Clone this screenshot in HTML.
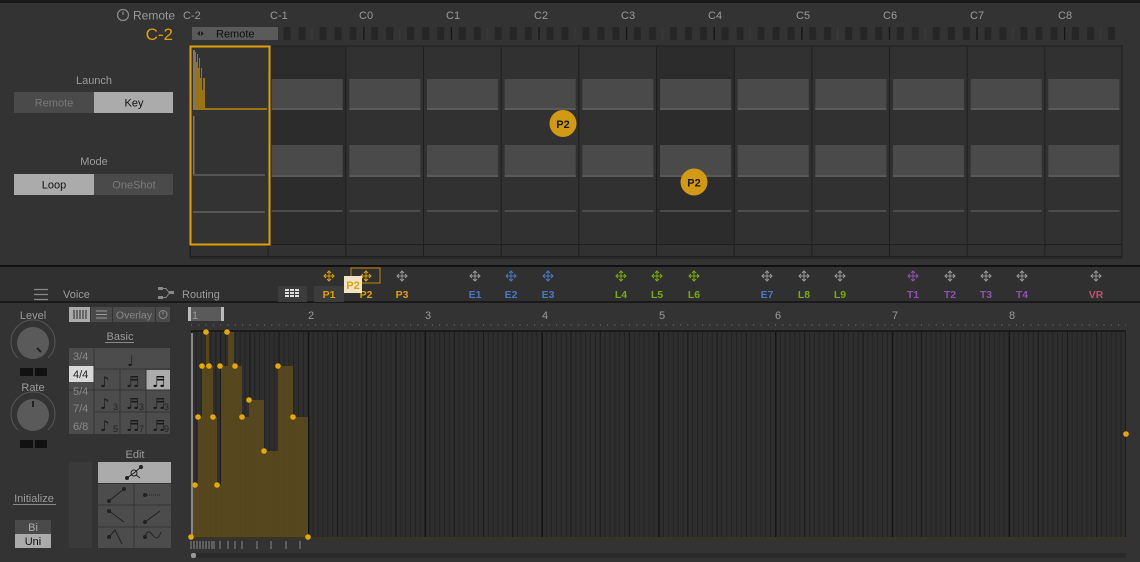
<!DOCTYPE html>
<html><head><meta charset="utf-8"><style>
html,body{margin:0;padding:0;background:#333;}
svg{display:block;font-family:"Liberation Sans",sans-serif;}
</style></head><body>
<svg width="1140" height="562" viewBox="0 0 1140 562" xmlns="http://www.w3.org/2000/svg">
<defs>
<pattern id="keys" x="188" y="0" width="87.6" height="562" patternUnits="userSpaceOnUse">
<rect x="8" y="27" width="7" height="13" fill="#262626"/>
<rect x="23" y="27" width="7" height="13" fill="#262626"/>
<rect x="36" y="28" width="1" height="11" fill="#3c3c3c"/>
<rect x="44" y="27" width="7" height="13" fill="#262626"/>
<rect x="59" y="27" width="7" height="13" fill="#262626"/>
<rect x="74" y="27" width="7" height="13" fill="#262626"/>
<rect x="0" y="27" width="1.3" height="13" fill="#141414"/>
</pattern>
<pattern id="col" x="190" y="0" width="77.67" height="562" patternUnits="userSpaceOnUse">
<rect x="0" y="47" width="1" height="210" fill="#1e1e1e"/>
<rect x="4" y="79" width="71" height="31" fill="#4a4a4a"/>
<rect x="4" y="108" width="71" height="2" fill="#5a5a5a"/>
<rect x="4" y="145" width="71" height="32" fill="#4a4a4a"/>
<rect x="4" y="175" width="71" height="2" fill="#5a5a5a"/>
<rect x="4" y="210" width="71" height="2" fill="#4c4c4c"/>
</pattern>
<pattern id="dots" x="0" y="0" width="3" height="3" patternUnits="userSpaceOnUse"><rect width="1.5" height="1" fill="#1c1c1c"/></pattern>
<pattern id="stripe" x="191" y="0" width="4.866" height="562" patternUnits="userSpaceOnUse">
<rect width="4.866" height="562" fill="#2e2e2e"/><rect x="0" width="1" height="562" fill="#222"/>
</pattern>
<pattern id="beat" x="191" y="0" width="116.8" height="562" patternUnits="userSpaceOnUse">
<rect x="0" width="1.5" height="562" fill="#141414"/>
<rect x="29.2" width="1" height="562" fill="#1a1a1a"/>
<rect x="58.4" width="1" height="562" fill="#1a1a1a"/>
<rect x="87.6" width="1" height="562" fill="#1a1a1a"/>
</pattern>
<pattern id="tick" x="191" y="0" width="7.3" height="562" patternUnits="userSpaceOnUse"><rect width="1" height="2" y="324" fill="#555"/></pattern>
<g id="mv"><path d="M0,-5V5M-5,0H5M-2,-3L0,-5L2,-3M-2,3L0,5L2,3M-3,-2L-5,0L-3,2M3,-2L5,0L3,2" stroke="currentColor" stroke-width="1" fill="none"/></g>
</defs>

<rect x="0" y="0" width="1140" height="3" fill="#1a1a1a"/>
<rect x="0" y="3" width="1140" height="262" fill="#333"/>

<circle cx="123" cy="15" r="5.5" fill="none" stroke="#888" stroke-width="1.3"/>
<path d="M123,11.5V15" stroke="#888" stroke-width="1.3"/>
<text x="133" y="19.5" font-size="12" fill="#9a9a9a">Remote</text>
<text x="173" y="40" font-size="17" fill="#e0a000" text-anchor="end">C-2</text>
<rect x="192" y="27" width="86" height="13" fill="#5a5a5a"/>
<path d="M197,33.5l3,-2.5v5z M204,33.5l-3,-2.5v5z" fill="#222"/>
<text x="216" y="37.5" font-size="11" fill="#111">Remote</text>
<rect x="278" y="27" width="844" height="13" fill="#333"/>
<rect x="278" y="27" width="844" height="13" fill="url(#keys)"/>
<g font-size="11" fill="#9a9a9a">
<text x="183" y="19">C-2</text><text x="270" y="19">C-1</text><text x="359" y="19">C0</text>
<text x="446" y="19">C1</text><text x="534" y="19">C2</text><text x="621" y="19">C3</text>
<text x="708" y="19">C4</text><text x="796" y="19">C5</text><text x="883" y="19">C6</text>
<text x="970" y="19">C7</text><text x="1058" y="19">C8</text>
</g>

<rect x="190" y="46" width="932" height="212" fill="#313131" stroke="#1e1e1e"/>
<rect x="269" y="47" width="77" height="197" fill="#2c2c2c"/>
<rect x="657" y="47" width="78" height="197" fill="#2c2c2c"/>
<rect x="190" y="47" width="932" height="210" fill="url(#col)"/>
<rect x="190" y="112" width="932" height="1" fill="url(#dots)"/>
<rect x="190" y="178" width="932" height="1" fill="url(#dots)"/>
<rect x="190" y="244" width="932" height="1" fill="#1e1e1e"/>
<rect x="190" y="256" width="932" height="1" fill="#1e1e1e"/>
<rect x="191" y="47" width="78" height="198" fill="#333"/>
<rect x="193" y="50" width="2" height="60" fill="#777"/>
<path d="M195,110V52h1V62h1v-8h1v14h1v-10h1v20h1v-10h1v22h1v-12h2V110z" fill="#9a7410"/>
<rect x="195" y="108" width="72" height="2" fill="#9a7410"/>
<rect x="193" y="116" width="1.5" height="58" fill="#777"/>
<rect x="193" y="174" width="72" height="2" fill="#555"/>
<rect x="193" y="211" width="72" height="2" fill="#555"/>
<rect x="190.5" y="46.5" width="79" height="198" fill="none" stroke="#e0a000" stroke-width="2"/>
<circle cx="563" cy="123.5" r="13.5" fill="#d29a12"/>
<text x="563" y="128" font-size="11" font-weight="bold" fill="#1a1a1a" text-anchor="middle">P2</text>
<circle cx="694" cy="182" r="13.5" fill="#d29a12"/>
<text x="694" y="186.5" font-size="11" font-weight="bold" fill="#1a1a1a" text-anchor="middle">P2</text>

<text x="94" y="84" font-size="11" fill="#9a9a9a" text-anchor="middle">Launch</text>
<rect x="14" y="92" width="80" height="21" fill="#4a4a4a"/>
<rect x="94" y="92" width="79" height="21" fill="#ababab"/>
<text x="54" y="106.5" font-size="11" fill="#7a7a7a" text-anchor="middle">Remote</text>
<text x="134" y="106.5" font-size="11" fill="#111" text-anchor="middle">Key</text>
<text x="94" y="165" font-size="11" fill="#9a9a9a" text-anchor="middle">Mode</text>
<rect x="14" y="174" width="80" height="21" fill="#ababab"/>
<rect x="94" y="174" width="79" height="21" fill="#4a4a4a"/>
<text x="54" y="188.5" font-size="11" fill="#111" text-anchor="middle">Loop</text>
<text x="134" y="188.5" font-size="11" fill="#7a7a7a" text-anchor="middle">OneShot</text>

<rect x="0" y="265" width="1140" height="2" fill="#111"/>
<rect x="0" y="267" width="1140" height="35" fill="#303030"/>
<rect x="0" y="301" width="1140" height="2" fill="#1a1a1a"/>
<path d="M34,289.5h14M34,294.5h14M34,299.5h14" stroke="#888" stroke-width="1.2"/>
<text x="63" y="298" font-size="11" fill="#9a9a9a">Voice</text>
<rect x="158" y="287" width="5" height="3" fill="#888"/><rect x="158" y="296" width="5" height="3" fill="#888"/>
<path d="M163,288.5h3l3,4h5M163,297.5h3l3,-4" stroke="#888" fill="none"/><rect x="169" y="291" width="5" height="3" fill="#888"/>
<text x="182" y="298" font-size="11" fill="#9a9a9a">Routing</text>
<rect x="278" y="286" width="29" height="16" fill="#3c3c3c"/>
<g fill="#ddd"><rect x="285" y="289" width="4" height="2"/><rect x="290" y="289" width="4" height="2"/><rect x="295" y="289" width="4" height="2"/>
<rect x="285" y="292" width="4" height="2"/><rect x="290" y="292" width="4" height="2"/><rect x="295" y="292" width="4" height="2"/>
<rect x="285" y="295" width="4" height="2"/><rect x="290" y="295" width="4" height="2"/><rect x="295" y="295" width="4" height="2"/></g>
<rect x="314" y="286" width="30" height="16" fill="#3c3c3c"/>
<rect x="351" y="268" width="29" height="15" fill="none" stroke="#c08a00"/>
<g font-size="10.5" font-weight="bold" text-anchor="middle">
<use href="#mv" x="329" y="276" style="color:#e0a000"/><text x="329" y="298" fill="#e0a000">P1</text>
<use href="#mv" x="366" y="276" style="color:#e0a000"/><text x="366" y="298" fill="#e0a000">P2</text>
<use href="#mv" x="402" y="276" style="color:#999"/><text x="402" y="298" fill="#e0a000">P3</text>
<use href="#mv" x="475" y="276" style="color:#999"/><text x="475" y="298" fill="#4a78c0">E1</text>
<use href="#mv" x="511" y="276" style="color:#4a78c0"/><text x="511" y="298" fill="#4a78c0">E2</text>
<use href="#mv" x="548" y="276" style="color:#4a78c0"/><text x="548" y="298" fill="#4a78c0">E3</text>
<use href="#mv" x="621" y="276" style="color:#7aaa10"/><text x="621" y="298" fill="#7aaa10">L4</text>
<use href="#mv" x="657" y="276" style="color:#7aaa10"/><text x="657" y="298" fill="#7aaa10">L5</text>
<use href="#mv" x="694" y="276" style="color:#7aaa10"/><text x="694" y="298" fill="#7aaa10">L6</text>
<use href="#mv" x="767" y="276" style="color:#999"/><text x="767" y="298" fill="#4a78c0">E7</text>
<use href="#mv" x="804" y="276" style="color:#999"/><text x="804" y="298" fill="#7aaa10">L8</text>
<use href="#mv" x="840" y="276" style="color:#999"/><text x="840" y="298" fill="#7aaa10">L9</text>
<use href="#mv" x="913" y="276" style="color:#9050b0"/><text x="913" y="298" fill="#9050b0">T1</text>
<use href="#mv" x="950" y="276" style="color:#999"/><text x="950" y="298" fill="#9050b0">T2</text>
<use href="#mv" x="986" y="276" style="color:#999"/><text x="986" y="298" fill="#9050b0">T3</text>
<use href="#mv" x="1022" y="276" style="color:#999"/><text x="1022" y="298" fill="#9050b0">T4</text>
<use href="#mv" x="1096" y="276" style="color:#999"/><text x="1096" y="298" fill="#c05070">VR</text>
</g>
<rect x="344" y="276" width="18" height="17" fill="#f0e4c8"/>
<text x="353" y="289" font-size="11" font-weight="bold" fill="#e0a000" text-anchor="middle">P2</text>

<rect x="0" y="303" width="1140" height="259" fill="#333"/>
<text x="33" y="319" font-size="11" fill="#9a9a9a" text-anchor="middle">Level</text>
<path d="M18,358 A22,22 0 1 1 48,358" stroke="#555" fill="none" stroke-width="1"/>
<circle cx="33" cy="343" r="16" fill="#5a5a5a"/>
<path d="M37,348l4,4" stroke="#222" stroke-width="2"/>
<rect x="20" y="368" width="13" height="8" fill="#111"/><rect x="35" y="368" width="12" height="8" fill="#111"/>
<text x="33" y="391" font-size="11" fill="#9a9a9a" text-anchor="middle">Rate</text>
<path d="M18,430 A22,22 0 1 1 48,430" stroke="#555" fill="none" stroke-width="1"/>
<circle cx="33" cy="415" r="16" fill="#5a5a5a"/>
<path d="M33,401v6" stroke="#222" stroke-width="2"/>
<rect x="20" y="440" width="13" height="8" fill="#111"/><rect x="35" y="440" width="12" height="8" fill="#111"/>
<text x="34" y="502" font-size="11" fill="#9a9a9a" text-anchor="middle">Initialize</text>
<rect x="13" y="504" width="43" height="1" fill="#888"/>
<rect x="15" y="520" width="36" height="14" fill="#4a4a4a"/>
<rect x="15" y="534" width="36" height="14" fill="#ababab"/>
<text x="33" y="531" font-size="11" fill="#aaa" text-anchor="middle">Bi</text>
<text x="33" y="545" font-size="11" fill="#111" text-anchor="middle">Uni</text>

<rect x="69" y="307" width="21" height="15" fill="#ababab"/>
<path d="M74,310v9M77,310v9M80,310v9M83,310v9M86,310v9" stroke="#222"/>
<rect x="91" y="307" width="21" height="15" fill="#4a4a4a"/>
<path d="M96,311h11M96,314.5h11M96,318h11" stroke="#999"/>
<rect x="113" y="307" width="42" height="15" fill="#4a4a4a"/>
<text x="134" y="318.5" font-size="10.5" fill="#888" text-anchor="middle">Overlay</text>
<rect x="156" y="307" width="14" height="15" fill="#4a4a4a"/>
<circle cx="163" cy="314.5" r="4" fill="none" stroke="#888"/><path d="M163,311.5v3" stroke="#888"/>
<text x="120" y="340" font-size="11" fill="#9a9a9a" text-anchor="middle">Basic</text>
<rect x="105" y="342" width="29" height="1" fill="#888"/>
<rect x="69" y="348" width="101" height="86" fill="#4c4c4c"/>
<rect x="69" y="366" width="25" height="16" fill="#d8d8d8"/>
<rect x="146" y="370" width="24" height="20" fill="#ababab"/>
<g stroke="#333" stroke-width="1"><path d="M94,348v86M69,390h101M95,369h75M95,412h75M120,369v65M146,369v65"/></g>
<g font-size="11" fill="#888">
<text x="73" y="360">3/4</text><text x="73" y="378" fill="#222">4/4</text><text x="73" y="395">5/4</text><text x="73" y="412">7/4</text><text x="73" y="430">6/8</text>
</g>
<g font-size="15" fill="#1c1c1c" font-family="DejaVu Sans,sans-serif">
<text x="127" y="366">♩</text>
<text x="100" y="387">♪</text><text x="126" y="387">♬</text><text x="152" y="387" fill="#111">♬</text>
<text x="100" y="409">♪</text><text x="126" y="409">♬</text><text x="152" y="409">♬</text>
<text x="100" y="431">♪</text><text x="126" y="431">♬</text><text x="152" y="431">♬</text>
</g>
<g font-size="9" fill="#222"><text x="113" y="410">3</text><text x="139" y="410">3</text><text x="164" y="410">3</text>
<text x="113" y="432">5</text><text x="139" y="432">7</text><text x="164" y="432">9</text></g>
<text x="135" y="458" font-size="11" fill="#9a9a9a" text-anchor="middle">Edit</text>
<rect x="69" y="462" width="23" height="86" fill="#3a3a3a"/>
<rect x="98" y="462" width="73" height="21" fill="#ababab"/>
<rect x="98" y="484" width="73" height="64" fill="#4c4c4c"/>
<path d="M134,484v64M98,505h73M98,527h73" stroke="#333"/>
<g stroke="#222" fill="#222">
<circle cx="127" cy="478" r="1.5"/><circle cx="141" cy="467" r="1.5"/><circle cx="134" cy="473" r="3" fill="none"/><path d="M127,478L134,473L141,467M136,475l4,3" fill="none"/>
<circle cx="109" cy="501" r="1.5"/><circle cx="124" cy="489" r="1.5"/><path d="M109,501L124,489" fill="none"/>
<circle cx="145" cy="495" r="1.5"/><path d="M147,495h14" stroke-dasharray="1 1" fill="none"/>
<circle cx="109" cy="511" r="1.5"/><path d="M109,511L124,522" fill="none"/>
<circle cx="145" cy="522" r="1.5"/><path d="M145,522L160,511" fill="none"/>
<circle cx="109" cy="537" r="1.5"/><path d="M109,537L115,530L122,544" fill="none"/>
<circle cx="145" cy="537" r="1.5"/><path d="M145,537C150,520 155,550 161,532" fill="none"/>
</g>

<rect x="188" y="307" width="36" height="14" rx="4" fill="#5a5a5a"/>
<rect x="188" y="307" width="3" height="14" fill="#bbb"/><rect x="221" y="307" width="3" height="14" fill="#bbb"/>
<g font-size="11" fill="#9a9a9a">
<text x="192" y="319">1</text><text x="308" y="319">2</text><text x="425" y="319">3</text><text x="542" y="319">4</text>
<text x="659" y="319">5</text><text x="775" y="319">6</text><text x="892" y="319">7</text><text x="1009" y="319">8</text>
</g>
<rect x="191" y="320" width="935" height="8" fill="url(#tick)"/>

<rect x="191" y="331" width="935" height="206" fill="url(#stripe)"/>
<rect x="191" y="331" width="935" height="206" fill="url(#beat)"/>
<rect x="191" y="330" width="935" height="2" fill="#1c1c1c"/>
<path d="M193,537V485H198V417H202V366H206V332H209V366H213V417H217V485H221V366H228V332H234V366H242V417H249V400H264V451H278V366H293V417H308V537Z" fill="#5b4a1e" fill-opacity="0.9"/>
<rect x="191" y="333" width="2" height="204" fill="#888"/>
<rect x="191" y="537" width="935" height="2" fill="#3a3520"/>
<g fill="#e8a800">
<circle cx="195" cy="485" r="2.8"/><circle cx="198" cy="417" r="2.8"/><circle cx="202" cy="366" r="2.8"/><circle cx="206" cy="332" r="2.8"/>
<circle cx="209" cy="366" r="2.8"/><circle cx="213" cy="417" r="2.8"/><circle cx="217" cy="485" r="2.8"/><circle cx="220" cy="366" r="2.8"/>
<circle cx="227" cy="332" r="2.8"/><circle cx="235" cy="366" r="2.8"/><circle cx="242" cy="417" r="2.8"/><circle cx="249" cy="400" r="2.8"/>
<circle cx="264" cy="451" r="2.8"/><circle cx="278" cy="366" r="2.8"/><circle cx="293" cy="417" r="2.8"/>
<circle cx="191" cy="537" r="2.8"/><circle cx="308" cy="537" r="2.8"/><circle cx="1126" cy="434" r="2.8"/>
</g>
<g stroke="#888" stroke-width="1">
<path d="M191,541v8M194,541v8M197,541v8M200,541v8M203,541v8M206,541v8M209,541v8M212,541v8M214,541v8M220,541v8M228,541v8M235,541v8M242,541v8M257,541v8M271,541v8M286,541v8M300,541v8"/>
</g>
<rect x="191" y="553" width="935" height="5" rx="2" fill="#2a2a2a"/>
<rect x="191" y="553" width="5" height="5" rx="2" fill="#999"/>
</svg>
</body></html>
